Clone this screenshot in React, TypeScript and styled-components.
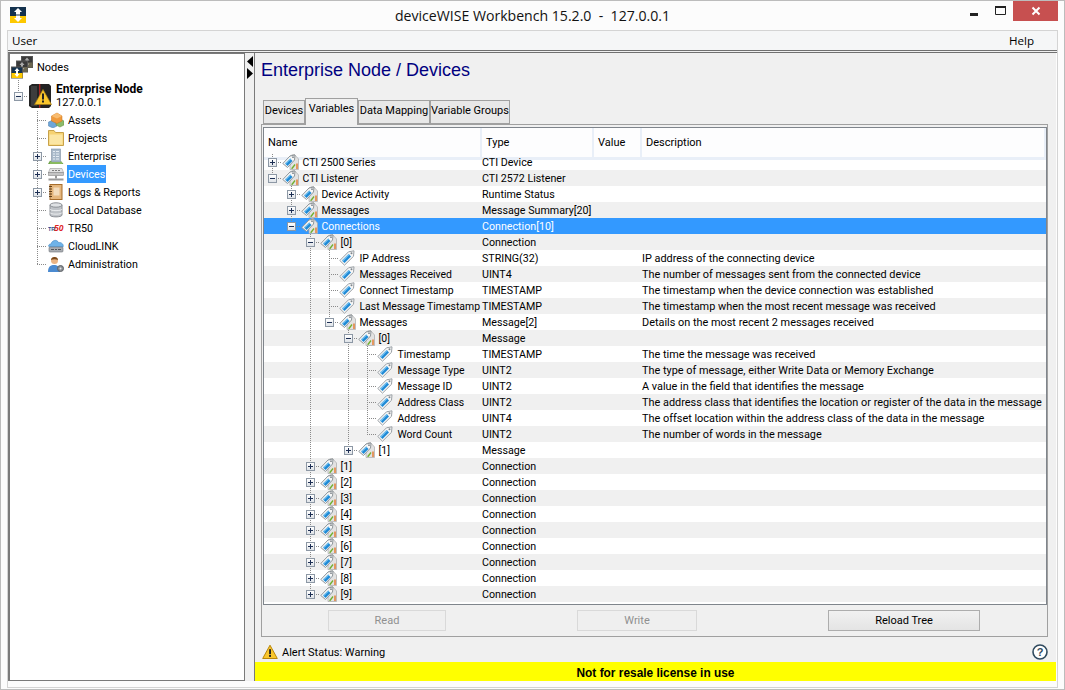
import React from 'react';
import styled, { createGlobalStyle } from 'styled-components';

const GlobalStyle = createGlobalStyle`
  html, body {
    margin: 0;
    padding: 0;
    background: #fcfcfc;
  }
  * {
    box-sizing: border-box;
  }
`;

const FONT = `Roboto, "Liberation Sans", Arial, sans-serif`;

const Window = styled.div`
  width: 1065px;
  height: 690px;
  display: flex;
  flex-direction: column;
  border: 1px solid #bcbcbc;
  background: #fcfcfc;
  font-family: ${FONT};
  font-size: 11px;
  color: #000;
  overflow: hidden;
`;

const TitleBar = styled.div`
  height: 29px;
  flex: none;
  display: flex;
  align-items: flex-start;
  position: relative;
  padding-left: 9px;
`;

const LogoSlot = styled.div`
  margin-top: 6px;
  height: 16px;
`;

const TitleText = styled.div`
  position: absolute;
  left: 0;
  right: 0;
  top: 5px;
  text-align: center;
  font-family: "Open Sans", sans-serif;
  font-size: 14.1px;
  line-height: 20px;
  color: #111;
  white-space: pre;
`;

const WindowControls = styled.div`
  margin-left: auto;
  display: flex;
  align-items: flex-start;
  padding-right: 6px;
`;

const ControlButton = styled.div<{ $w: number }>`
  width: ${(p) => p.$w}px;
  height: 20px;
  display: flex;
  align-items: center;
  justify-content: center;
`;

const CloseButton = styled(ControlButton)`
  background: #c75050;
`;

const Frame = styled.div`
  flex: 1;
  min-height: 0;
  margin: 0 6px 1px 6px;
  border: 1px solid #d4d4d4;
  display: flex;
  flex-direction: column;
  padding-bottom: 6px;
`;

const MenuBar = styled.div`
  height: 22px;
  flex: none;
  display: flex;
  justify-content: space-between;
  align-items: flex-start;
  padding: 1px 23px 0 4px;
  background: linear-gradient(#f5f6f7 19px, #707070 19px, #707070 20px, #f0f0f0 20px, #f0f0f0 21px, #707070 21px);
  font-family: "Open Sans", sans-serif;
  font-size: 11.6px;
  line-height: 17px;
`;

const Body = styled.div`
  flex: 1;
  min-height: 0;
  display: flex;
  background: #f0f0f0;
  margin-right: 1px;
`;

const NavPanel = styled.div`
  width: 237px;
  flex: none;
  background: #fff;
  border: 1px solid #7a7a7a;
  border-left-width: 2px;
  padding-top: 2px;
  overflow: hidden;
  font-size: 10.7px;
`;

const NavHead = styled.div`
  height: 22px;
  margin-bottom: 2px;
  display: flex;
  align-items: center;
  gap: 3px;
  font-size: 11px;
`;

const NavRootRow = styled.div`
  height: 31px;
  display: flex;
  align-items: center;
  margin-left: -1px;
`;

const NavRootText = styled.div`
  margin-left: 4px;
  line-height: 14px;
  font-size: 11.2px;
  b {
    display: block;
    font-size: 12px;
  }
`;

const NavRow = styled.div`
  height: 18px;
  display: flex;
  align-items: center;
  padding-left: 18px;
`;

const NavIcon = styled.div`
  width: 20px;
  height: 18px;
  padding-left: 1px;
  flex: none;
  display: flex;
  align-items: center;
`;

const NavLabel = styled.span<{ $selected?: boolean }>`
  height: 18px;
  line-height: 20px;
  padding: 0 1px;
  background: ${(p) => (p.$selected ? '#3399ff' : 'transparent')};
  color: ${(p) => (p.$selected ? '#fff' : '#000')};
`;

const Splitter = styled.div`
  width: 9px;
  flex: none;
  display: flex;
  flex-direction: column;
  align-items: center;
  padding-top: 3px;
  gap: 1px;
`;

const Main = styled.div`
  flex: 1;
  min-width: 0;
  display: flex;
  flex-direction: column;
  border-left: 1px solid #7a7a7a;
  padding-top: 5px;
`;

const Heading = styled.h1`
  margin: 0;
  padding-left: 6px;
  height: 39px;
  font-family: "Liberation Sans", Arial, sans-serif;
  font-size: 18px;
  line-height: 25px;
  font-weight: 400;
  color: #000080;
`;

const TabStrip = styled.div`
  display: flex;
  align-items: flex-end;
  height: 27px;
  margin-left: 8px;
  position: relative;
  z-index: 1;
  flex: none;
`;

const Tab = styled.div<{ $active?: boolean; $w: number }>`
  width: ${(p) => p.$w}px;
  height: ${(p) => (p.$active ? 27 : 24)}px;
  margin-bottom: ${(p) => (p.$active ? -1 : 0)}px;
  background: ${(p) => (p.$active ? '#f0f0f0' : '#e8e8e8')};
  border: 1px solid #a0a0a0;
  border-bottom: ${(p) => (p.$active ? 'none' : '1px solid #a0a0a0')};
  text-align: center;
  line-height: 19px;
  white-space: nowrap;
`;

const TabPane = styled.div`
  width: 787px;
  height: 513px;
  margin-left: 6px;
  flex: none;
  border: 1px solid #a0a0a0;
  padding: 2px 0 0 1px;
  display: flex;
  flex-direction: column;
`;

const Table = styled.div`
  height: 478px;
  flex: none;
  border: 1px solid #7f858c;
  background: #fff;
  overflow: hidden;
`;

const COLUMNS = '218px 112px 48px 1fr';

const HeaderRow = styled.div`
  display: grid;
  grid-template-columns: ${COLUMNS};
  height: 26px;
`;

const HeaderCell = styled.div`
  padding-left: 4px;
  line-height: 29px;
  background: #fdfdfe;
  border-right: 2px solid #e9eff8;
  border-bottom: 3px solid #e9eff8;
`;

const Row = styled.div<{ $striped: boolean; $selected?: boolean }>`
  display: grid;
  grid-template-columns: ${COLUMNS};
  height: 16px;
  line-height: 18px;
  white-space: nowrap;
  background: ${(p) => (p.$selected ? '#3399ff' : p.$striped ? '#f0f0f0' : '#fff')};
  color: ${(p) => (p.$selected ? '#fff' : '#000')};
`;

const NameCell = styled.div`
  display: flex;
  margin-left: -1px;
  height: 16px;
  min-width: 0;
`;

const RowIcon = styled.div`
  width: 19px;
  height: 16px;
  flex: none;
  display: flex;
  align-items: center;
`;

const RowLabel = styled.span`
  padding-left: 1.5px;
  font-size: 10.45px;
`;

const TypeCell = styled.div`
  min-width: 0;
  font-size: 10.7px;
`;

const ValueCell = styled.div`
  min-width: 0;
`;

const DescCell = styled.div`
  min-width: 0;
  font-size: 10.9px;
`;

type GuideKind = 'none' | 'through' | 'tee' | 'elbow';

const Guide = styled.div<{ $kind: GuideKind }>`
  width: 19px;
  height: 100%;
  flex: none;
  position: relative;
  display: flex;
  align-items: center;
  &::before {
    content: '';
    display: ${(p) => (p.$kind === 'none' ? 'none' : 'block')};
    position: absolute;
    left: 9px;
    top: 0;
    width: 1px;
    height: ${(p) => (p.$kind === 'elbow' ? '50%' : '100%')};
    background: linear-gradient(#8a8a8a 50%, transparent 50%) 0 0 / 1px 2px repeat-y;
  }
  &::after {
    content: '';
    display: ${(p) => (p.$kind === 'tee' || p.$kind === 'elbow' ? 'block' : 'none')};
    position: absolute;
    left: 9px;
    top: 50%;
    width: 10px;
    height: 1px;
    background: linear-gradient(90deg, #8a8a8a 50%, transparent 50%) 0 0 / 2px 1px repeat-x;
  }
`;

const ExpanderBox = styled.div`
  position: absolute;
  left: 5px;
  top: 50%;
  margin-top: -4px;
  width: 9px;
  height: 9px;
  z-index: 1;
  border: 1px solid #8d98a5;
  background: linear-gradient(#ffffff, #dfe3e8);
`;

const Sign = styled.div<{ $open: boolean }>`
  position: relative;
  width: 7px;
  height: 7px;
  &::before {
    content: '';
    position: absolute;
    left: 1px;
    top: 3px;
    width: 5px;
    height: 1px;
    background: #1d2f54;
  }
  &::after {
    content: '';
    display: ${(p) => (p.$open ? 'none' : 'block')};
    position: absolute;
    left: 3px;
    top: 1px;
    width: 1px;
    height: 5px;
    background: #1d2f54;
  }
`;

const ButtonRow = styled.div`
  display: flex;
  gap: 131px;
  padding: 5px 0 0 65px;
`;

const Button = styled.div<{ $w: number; $disabled?: boolean }>`
  width: ${(p) => p.$w}px;
  height: 21px;
  line-height: 19px;
  text-align: center;
  color: ${(p) => (p.$disabled ? '#8f8f8f' : '#000')};
  border: 1px solid ${(p) => (p.$disabled ? '#d9d9d9' : '#adadad')};
  background: ${(p) => (p.$disabled ? '#efefef' : 'linear-gradient(#f1f1f1, #e4e4e4)')};
`;

const StatusRow = styled.div`
  flex: 1;
  min-height: 0;
  display: flex;
  align-items: center;
  gap: 4px;
  padding: 5px 8px 0 7px;
`;

const HelpSlot = styled.div`
  margin-left: auto;
  height: 16px;
`;

const LicenseBar = styled.div`
  height: 19px;
  flex: none;
  background: #ffff00;
  text-align: center;
  line-height: 22px;
  font-family: "Liberation Sans", Arial, sans-serif;
  font-weight: 700;
  font-size: 11.9px;
`;

const Logo = () => (
  <svg width="16" height="16" viewBox="0 0 16 16">
    <rect width="16" height="9" fill="#14324e" />
    <rect y="9" width="16" height="7" fill="#fdc800" />
    <path d="M8 1 12 5H10V7.5H6V5H4Z" fill="#fff" />
    <path d="M8 15 12 11H10V8.5H6V11H4Z" fill="#fff" />
  </svg>
);

const MiniNode = ({ x, y, dim }: { x: number; y: number; dim?: boolean }) => (
  <g transform={`translate(${x} ${y})`}>
    <rect width="11" height="11" fill={dim ? '#3a3a3a' : '#14324e'} stroke="#555" />
    <rect y="6" width="11" height="5" fill={dim ? '#6b6650' : '#fdc800'} />
    <path d="M5.5 1 8 4H6.5V7H8L5.5 10 3 7H4.5V4H3Z" fill={dim ? '#aaa' : '#fff'} />
  </g>
);

const NodesIcon = () => (
  <svg width="24" height="24" viewBox="0 0 24 24">
    <MiniNode x={11.5} y={1.5} dim />
    <MiniNode x={6.5} y={6} dim />
    <MiniNode x={1.5} y={12} />
  </svg>
);

const WarnTriangle = ({ size = 16 }: { size?: number }) => (
  <svg width={size} height={size} viewBox="0 0 16 16">
    <path d="M8 1.2 15.3 14.5H.7Z" fill="#f9c62d" stroke="#b8860b" strokeLinejoin="round" />
    <rect x="7.1" y="5.2" width="1.9" height="5" fill="#222" />
    <rect x="7.1" y="11" width="1.9" height="1.9" fill="#222" />
  </svg>
);

const ServerIcon = () => (
  <svg width="24" height="26" viewBox="0 0 24 26">
    <path d="M1 3 4 1H21L23 3V23L21 25H4L1 23Z" fill="#232323" />
    <rect x="11" y="1" width="1.4" height="24" fill="#a32222" />
    <rect x="3" y="3" width="6" height="20" fill="#3d3d3d" />
    <path d="M15 6.500 23.500 21.500H6.500Z" fill="#f9c62d" stroke="#a57c12" strokeWidth=".7" strokeLinejoin="round" />
    <rect x="14" y="10.500" width="2" height="6" fill="#222" />
    <rect x="14" y="17.500" width="2" height="2" fill="#222" />
  </svg>
);

const AssetsIcon = () => (
  <svg width="16" height="16" viewBox="0 0 16 16">
    <path d="M.5 10 5 8 9 10V14L5 16 .5 14Z" fill="#6ea6d8" stroke="#4c7fae" strokeWidth=".5" />
    <path d="M8 9 12 7 16 9V13L12 15 8 13Z" fill="#8dbb6a" stroke="#5e8a3e" strokeWidth=".5" />
    <path d="M3.500 4 9 1 14 4V9L9 11.500 3.500 9Z" fill="#ef9a3c" stroke="#c9711a" strokeWidth=".5" />
    <path d="M3.500 4 9 6.500 14 4 9 1Z" fill="#f8bc70" />
  </svg>
);

const FolderIcon = () => (
  <svg width="16" height="16" viewBox="0 0 16 16">
    <path d="M.5 .5H6L7.500 2.500H15.500V15.500H.5Z" fill="#f6d271" stroke="#c8a24a" />
    <rect x="1.500" y="4.500" width="13" height="10" fill="#fbe6a4" />
  </svg>
);

const BuildingIcon = () => (
  <svg width="16" height="16" viewBox="0 0 16 16">
    <rect x="3.500" y="1" width="9" height="13" fill="#a9b9c9" stroke="#7d8ea0" strokeWidth=".6" />
    <path d="M5 3H7V4H5ZM8 3H11V4H8ZM5 5.500H7V6.500H5ZM8 5.500H11V6.500H8ZM5 8H7V9H5ZM8 8H11V9H8ZM5 10.500H7V11.500H5ZM8 10.500H11V11.500H8Z" fill="#e6edf3" />
    <path d="M0 16 2 12.500 4 14 5 16ZM11 16 13 13 15.500 16Z" fill="#71a34c" />
    <rect x="2" y="14" width="12" height="2" fill="#8aba60" />
  </svg>
);

const RouterIcon = () => (
  <svg width="16" height="16" viewBox="0 0 16 16">
    <path d="M2 2.500H14L15.500 6.500H.5Z" fill="#e2e2e2" stroke="#9a9a9a" strokeWidth=".6" />
    <rect x=".5" y="6.500" width="15" height="3" fill="#c4c4c4" stroke="#8a8a8a" strokeWidth=".6" />
    <path d="M4 4.500H6M7 4.500H9M10 4.500H12" stroke="#7d7d7d" />
    <rect x="7" y="9.500" width="2" height="3" fill="#999" />
    <rect x=".5" y="12.500" width="15" height="2" fill="#999" />
  </svg>
);

const BookIcon = () => (
  <svg width="16" height="16" viewBox="0 0 16 16">
    <rect x="2" y=".5" width="12" height="15" fill="#e5b77e" stroke="#a76d2b" />
    <rect x="5.500" y="3.500" width="6" height="8" fill="#f3dcbc" />
    <path d="M1 2.500H4M1 5H4M1 7.500H4M1 10H4M1 12.500H4" stroke="#5d3d18" />
  </svg>
);

const DbIcon = () => (
  <svg width="16" height="16" viewBox="0 0 16 16">
    <path d="M2 3V13C2 15.500 14 15.500 14 13V3Z" fill="#bfc3c8" stroke="#8c9096" />
    <ellipse cx="8" cy="3" rx="6" ry="2.200" fill="#dfe2e5" stroke="#8c9096" />
    <path d="M2 7C2 9.200 14 9.200 14 7M2 10.500C2 12.700 14 12.700 14 10.500" fill="none" stroke="#eceef0" />
  </svg>
);

const Tr50Icon = () => (
  <svg width="16" height="16" viewBox="0 0 16 16">
    <text x="0" y="11" fontFamily="Liberation Sans, sans-serif" fontSize="5.500" fontWeight="700" fill="#2a4d8f">TR</text>
    <text x="6" y="11" fontFamily="Liberation Sans, sans-serif" fontSize="8.500" fontWeight="700" fontStyle="italic" fill="#d22">50</text>
  </svg>
);

const CloudIcon = () => (
  <svg width="16" height="16" viewBox="0 0 16 16">
    <path d="M2 9C0 9 0 6 3 6 4 2 9 1 10.500 4.500 14 4 16 7 15 9Z" fill="#6fb3e8" stroke="#3f86c4" strokeWidth=".6" />
    <rect x="1" y="9" width="14" height="5" rx="1" fill="#a9adb2" stroke="#6f7378" strokeWidth=".6" />
    <path d="M3 11.500H6M7 11.500H9M10 11.500H13" stroke="#52565a" />
  </svg>
);

const AdminIcon = () => (
  <svg width="16" height="16" viewBox="0 0 16 16">
    <path d="M0 16C0 10 3 9 6 9S12 10 12 16Z" fill="#4b8ad0" />
    <circle cx="6.500" cy="4.500" r="3.500" fill="#eab383" />
    <path d="M3 4C3 0 10 0 10 4 8 3 5 3 3 4Z" fill="#7a4a1c" />
    <circle cx="12.500" cy="12.500" r="3" fill="#8a8f95" stroke="#5e6266" />
    <circle cx="12.500" cy="12.500" r="1" fill="#e6e6e6" />
  </svg>
);

const TagIcon = () => (
  <svg width="16" height="16" viewBox="0 0 16 16">
    <path d="M.8 10.500 9.500 1.800 15 .8 14.500 6.300 5.500 15.200Z" fill="#f7f7f7" stroke="#9aa0a5" />
    <path d="M3 10.500 9.700 4 12 6.500 5.500 13Z" fill="#1f8ad6" />
    <path d="M3 10.500 9.700 4 10.500 4.800 4 11.400Z" fill="#7cc4f0" />
    <circle cx="12.500" cy="3.300" r="1" fill="#7f868c" />
  </svg>
);

const GroupTagIcon = () => (
  <svg width="18" height="16" viewBox="0 0 18 16">
    <path d="M8 2 12 0 16.500 5V15.500H8Z" fill="#e2e2e2" stroke="#a9a9a9" strokeWidth=".7" />
    <path d="M.8 9.500 8 2 13 1 12.500 6 5.500 13.500Z" fill="#f7f7f7" stroke="#8f969b" />
    <path d="M3 9.500 8.200 4.500 10.500 7 5.500 12Z" fill="#1f8ad6" />
    <path d="M3 9.500 8.200 4.500 9 5.300 3.800 10.300Z" fill="#7cc4f0" />
    <circle cx="11" cy="3.200" r=".9" fill="#7f868c" />
    <path d="M9 14.500 12.500 10 13.500 11 10.500 15Z" fill="#6faf2c" />
    <rect x="14.300" y="9.500" width="1.400" height="5.500" fill="#e6772a" />
  </svg>
);

const HelpIcon = () => (
  <svg width="16" height="16" viewBox="0 0 16 16">
    <circle cx="8" cy="8" r="7" fill="#fff" stroke="#2f4a5e" strokeWidth="1.600" />
    <text x="8" y="12" textAnchor="middle" fontFamily="Liberation Sans, sans-serif" fontSize="11" fontWeight="700" fill="#2f4a5e">?</text>
  </svg>
);

const ArrowLeft = () => (
  <svg width="6" height="11" viewBox="0 0 6 11">
    <path d="M6 0V11L0 5.500Z" fill="#000" />
  </svg>
);

const ArrowRight = () => (
  <svg width="6" height="11" viewBox="0 0 6 11">
    <path d="M0 0V11L6 5.500Z" fill="#000" />
  </svg>
);

type VarNode = {
  name: string;
  type: string;
  desc?: string;
  group?: boolean;
  open?: boolean;
  selected?: boolean;
  children?: VarNode[];
};

const leaf = (name: string, type: string, desc: string): VarNode => ({ name, type, desc });
const closed = (name: string, type: string): VarNode => ({ name, type, group: true });

const variables: VarNode[] = [
  closed('CTI 2500 Series', 'CTI Device'),
  {
    name: 'CTI Listener',
    type: 'CTI 2572 Listener',
    group: true,
    open: true,
    children: [
      closed('Device Activity', 'Runtime Status'),
      closed('Messages', 'Message Summary[20]'),
      {
        name: 'Connections',
        type: 'Connection[10]',
        group: true,
        open: true,
        selected: true,
        children: [
          {
            name: '[0]',
            type: 'Connection',
            group: true,
            open: true,
            children: [
              leaf('IP Address', 'STRING(32)', 'IP address of the connecting device'),
              leaf('Messages Received', 'UINT4', 'The number of messages sent from the connected device'),
              leaf('Connect Timestamp', 'TIMESTAMP', 'The timestamp when the device connection was established'),
              leaf('Last Message Timestamp', 'TIMESTAMP', 'The timestamp when the most recent message was received'),
              {
                name: 'Messages',
                type: 'Message[2]',
                desc: 'Details on the most recent 2 messages received',
                group: true,
                open: true,
                children: [
                  {
                    name: '[0]',
                    type: 'Message',
                    group: true,
                    open: true,
                    children: [
                      leaf('Timestamp', 'TIMESTAMP', 'The time the message was received'),
                      leaf('Message Type', 'UINT2', 'The type of message, either Write Data or Memory Exchange'),
                      leaf('Message ID', 'UINT2', 'A value in the field that identifies the message'),
                      leaf('Address Class', 'UINT2', 'The address class that identifies the location or register of the data in the message'),
                      leaf('Address', 'UINT4', 'The offset location within the address class of the data in the message'),
                      leaf('Word Count', 'UINT2', 'The number of words in the message'),
                    ],
                  },
                  closed('[1]', 'Message'),
                ],
              },
            ],
          },
          ...[1, 2, 3, 4, 5, 6, 7, 8, 9].map((n) => closed(`[${n}]`, 'Connection')),
        ],
      },
    ],
  },
];

type FlatRow = { node: VarNode; guides: GuideKind[] };

function flatten(nodes: VarNode[], parents: GuideKind[], out: FlatRow[]) {
  nodes.forEach((node, i) => {
    const last = i === nodes.length - 1;
    out.push({ node, guides: [...parents, last ? 'elbow' : 'tee'] });
    if (node.children) {
      flatten(node.children, [...parents, last ? 'none' : 'through'], out);
    }
  });
  return out;
}

const rows = flatten(variables, [], []);

const Expander = ({ open }: { open: boolean }) => (
  <ExpanderBox>
    <Sign $open={open} />
  </ExpanderBox>
);

const navItems: { label: string; icon: React.ReactNode; expandable?: boolean; selected?: boolean }[] = [
  { label: 'Assets', icon: <AssetsIcon /> },
  { label: 'Projects', icon: <FolderIcon /> },
  { label: 'Enterprise', icon: <BuildingIcon />, expandable: true },
  { label: 'Devices', icon: <RouterIcon />, expandable: true, selected: true },
  { label: 'Logs & Reports', icon: <BookIcon />, expandable: true },
  { label: 'Local Database', icon: <DbIcon /> },
  { label: 'TR50', icon: <Tr50Icon /> },
  { label: 'CloudLINK', icon: <CloudIcon /> },
  { label: 'Administration', icon: <AdminIcon /> },
];

function App() {
  return (
    <Window>
      <GlobalStyle />
      <TitleBar>
        <LogoSlot>
          <Logo />
        </LogoSlot>
        <TitleText>{'deviceWISE Workbench 15.2.0  -  127.0.0.1'}</TitleText>
        <WindowControls>
          <ControlButton $w={26}>
            <svg width="10" height="10" viewBox="0 0 10 10">
              <rect x="1" y="7" width="8" height="3" fill="#222" />
            </svg>
          </ControlButton>
          <ControlButton $w={26}>
            <svg width="11" height="10" viewBox="0 0 11 10">
              <path d="M.5 .5H10.500V8.500H.5Z" fill="none" stroke="#222" />
              <rect width="11" height="2" fill="#222" />
            </svg>
          </ControlButton>
          <CloseButton $w={45}>
            <svg width="10" height="10" viewBox="0 0 10 10">
              <path d="M1.500 1.500 8.500 8.500M8.500 1.500 1.500 8.500" stroke="#fff" strokeWidth="2" />
            </svg>
          </CloseButton>
        </WindowControls>
      </TitleBar>
      <Frame>
        <MenuBar>
          <span>User</span>
          <span>Help</span>
        </MenuBar>
        <Body>
          <NavPanel>
            <NavHead>
              <NodesIcon />
              Nodes
            </NavHead>
            <NavRootRow>
              <Guide $kind="elbow">
                <Expander open />
              </Guide>
              <ServerIcon />
              <NavRootText>
                <b>Enterprise Node</b>
                127.0.0.1
              </NavRootText>
            </NavRootRow>
            {navItems.map((item, i) => (
              <NavRow key={item.label}>
                <Guide $kind={i === navItems.length - 1 ? 'elbow' : 'tee'}>
                  {item.expandable && <Expander open={false} />}
                </Guide>
                <NavIcon>{item.icon}</NavIcon>
                <NavLabel $selected={item.selected}>{item.label}</NavLabel>
              </NavRow>
            ))}
          </NavPanel>
          <Splitter>
            <ArrowLeft />
            <ArrowRight />
          </Splitter>
          <Main>
            <Heading>Enterprise Node / Devices</Heading>
            <TabStrip>
              <Tab $w={42}>Devices</Tab>
              <Tab $w={53} $active>Variables</Tab>
              <Tab $w={72}>Data Mapping</Tab>
              <Tab $w={80}>Variable Groups</Tab>
            </TabStrip>
            <TabPane>
              <Table>
                <HeaderRow>
                  <HeaderCell>Name</HeaderCell>
                  <HeaderCell>Type</HeaderCell>
                  <HeaderCell>Value</HeaderCell>
                  <HeaderCell>Description</HeaderCell>
                </HeaderRow>
                {rows.map(({ node, guides }, i) => (
                  <Row key={i} $striped={i % 2 === 1} $selected={node.selected}>
                    <NameCell>
                      {guides.map((kind, g) => (
                        <Guide key={g} $kind={kind}>
                          {g === guides.length - 1 && node.group && <Expander open={!!node.open} />}
                        </Guide>
                      ))}
                      <RowIcon>{node.group ? <GroupTagIcon /> : <TagIcon />}</RowIcon>
                      <RowLabel>{node.name}</RowLabel>
                    </NameCell>
                    <TypeCell>{node.type}</TypeCell>
                    <ValueCell />
                    <DescCell>{node.desc}</DescCell>
                  </Row>
                ))}
              </Table>
              <ButtonRow>
                <Button $w={118} $disabled>Read</Button>
                <Button $w={120} $disabled>Write</Button>
                <Button $w={152}>Reload Tree</Button>
              </ButtonRow>
            </TabPane>
            <StatusRow>
              <WarnTriangle />
              <span>Alert Status: Warning</span>
              <HelpSlot>
                <HelpIcon />
              </HelpSlot>
            </StatusRow>
            <LicenseBar>Not for resale license in use</LicenseBar>
          </Main>
        </Body>
      </Frame>
    </Window>
  );
}

export default App;
